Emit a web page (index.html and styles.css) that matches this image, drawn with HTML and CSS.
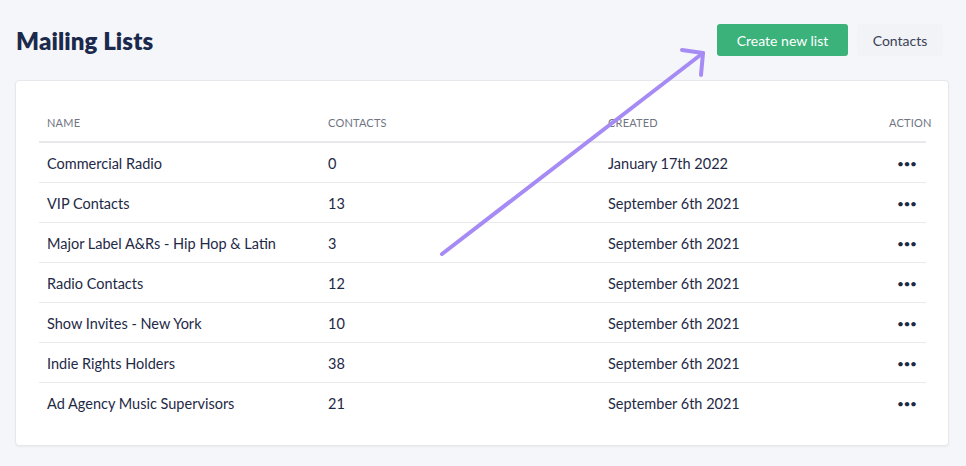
FILE: index.html
```html
<!DOCTYPE html>
<html lang="en">
<head>
<meta charset="UTF-8" />
<meta name="viewport" content="width=device-width, initial-scale=1" />
<title>Mailing Lists</title>
<link rel="stylesheet" href="styles.css">
</head>
<body>
<div class="page">
  <div class="top">
    <h1>Mailing Lists</h1>
    <div class="actions">
      <button class="btn-green">Create new list</button>
      <button class="btn-plain">Contacts</button>
    </div>
  </div>

  <div class="card">
    <div class="row head">
      <div>Name</div>
      <div>Contacts</div>
      <div>Created</div>
      <div class="act">Action</div>
    </div>
    <div class="row"><div>Commercial Radio</div><div>0</div><div>January 17th 2022</div><div class="dots">&bull;&bull;&bull;</div></div>
    <div class="row"><div>VIP Contacts</div><div>13</div><div>September 6th 2021</div><div class="dots">&bull;&bull;&bull;</div></div>
    <div class="row"><div>Major Label A&amp;Rs - Hip Hop &amp; Latin</div><div>3</div><div>September 6th 2021</div><div class="dots">&bull;&bull;&bull;</div></div>
    <div class="row"><div>Radio Contacts</div><div>12</div><div>September 6th 2021</div><div class="dots">&bull;&bull;&bull;</div></div>
    <div class="row"><div>Show Invites - New York</div><div>10</div><div>September 6th 2021</div><div class="dots">&bull;&bull;&bull;</div></div>
    <div class="row"><div>Indie Rights Holders</div><div>38</div><div>September 6th 2021</div><div class="dots">&bull;&bull;&bull;</div></div>
    <div class="row"><div>Ad Agency Music Supervisors</div><div>21</div><div>September 6th 2021</div><div class="dots">&bull;&bull;&bull;</div></div>
  </div>
</div>

<svg class="arrow" width="966" height="466" viewBox="0 0 966 466">
  <g stroke="#a78bf4" stroke-width="4" stroke-linecap="round" fill="none">
    <line x1="442" y1="254" x2="703" y2="53" />
    <polyline points="682,50 703,53 701,75" stroke-linejoin="round" />
  </g>
</svg>
</body>
</html>
```

FILE: styles.css
```css
body {
  margin: 0;
  background: #f5f6f9;
  font-family: "Lato", "Liberation Sans", sans-serif;
  color: #1e2946;
  position: relative;
}
.page { padding: 24px 17px 20px 15px; }
.top {
  display: flex; align-items: center; justify-content: space-between;
  height: 32px;
  margin-right: 6px;
}
h1 {
  margin: 0 0 0 1px;
  font-size: 24px;
  font-weight: 800;
  color: #1b2a4c;
  letter-spacing: 0.1px;
}
.actions { display: flex; gap: 9px; }
button {
  height: 32px;
  border: none;
  border-radius: 3px;
  font-family: "Lato", "Liberation Sans", sans-serif;
  font-size: 14px;
  cursor: pointer;
}
.btn-green { background: #3bb27a; color: #fff; width: 131px; }
.btn-plain { background: #f1f3f6; color: #3b4157; width: 86px; }
.card {
  margin-top: 24px;
  background: #fff;
  border: 1px solid #e6e8ec;
  border-radius: 4px;
  box-shadow: 0 1px 2px rgba(0,0,0,0.05);
  padding: 22px 22px 22px 23px;
}
.row {
  display: grid;
  grid-template-columns: 281px 280px 281px 45px;
  width: 887px;
  height: 40px;
  padding-top: 1px;
  align-items: center;
  font-size: 14.5px;
  border-bottom: 1px solid #e8e9ec;
  box-sizing: border-box;
}
.row:last-child { border-bottom: none; }
.row > div { padding-left: 8px; white-space: nowrap; }
.row.head {
  padding-top: 0;
  border-bottom: 2px solid #e8e9ec;
  font-size: 11px;
  text-transform: uppercase;
  color: #707582;
  letter-spacing: 0.2px;
}
.row.head .act { padding-left: 8px; }
.dots {
  font-size: 12px;
  letter-spacing: -0.5px;
  color: #1e2946;
  padding-left: 16px !important;
}
.arrow {
  position: absolute;
  top: 0; left: 0;
  pointer-events: none;
}
```
